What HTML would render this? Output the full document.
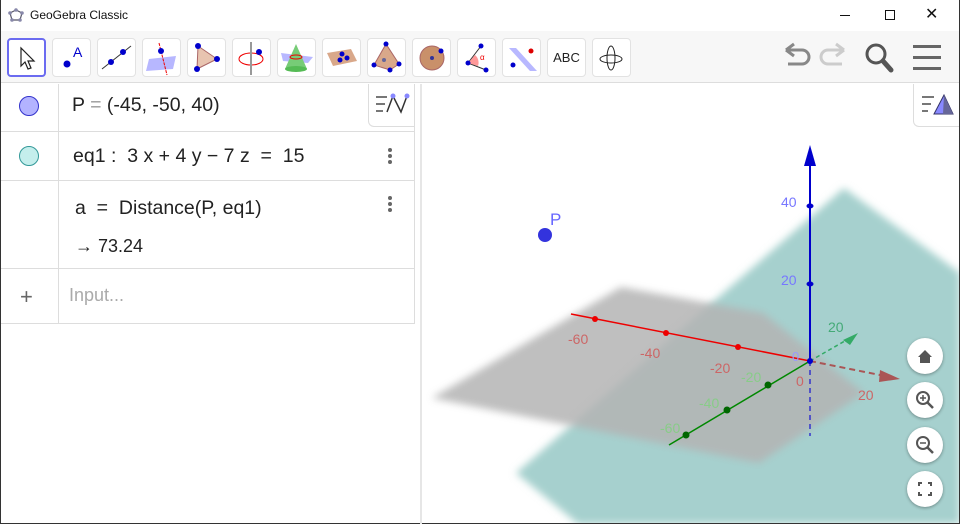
<!DOCTYPE html>
<html><head><meta charset="utf-8"><style>
*{margin:0;padding:0;box-sizing:border-box}
body{width:960px;height:524px;overflow:hidden;background:#fff;font-family:"Liberation Sans",sans-serif;position:relative}
.abs{position:absolute}
.btn{position:absolute;top:38px;width:39px;height:39px;border:1px solid #e2e2e2;border-radius:4px;background:#fff}
.row{position:absolute;left:1px;width:413px;border-bottom:1px solid #ddd}
.txt{position:absolute;font-size:19.5px;color:#222}
.dots{position:absolute;left:388px;width:4px}
.dots i{display:block;width:4px;height:4px;border-radius:2px;background:#666;margin-bottom:2px}
.circ{position:absolute;left:907px;width:36px;height:36px;border-radius:18px;background:#fff;box-shadow:0 1px 3px rgba(0,0,0,.35)}
</style></head><body>
<div class="abs" style="left:0;top:0;width:960px;height:524px;border:1px solid #333;border-top:none"></div>
<svg class="abs" style="left:8px;top:8px" width="16" height="14"><polygon points="8,2 14,5 12,12 4,12 2,5" fill="none" stroke="#556" stroke-width="1.2"/><g fill="#88a"><circle cx="8" cy="2" r="1.8"/><circle cx="14" cy="5" r="1.8"/><circle cx="12" cy="12" r="1.8"/><circle cx="4" cy="12" r="1.8"/><circle cx="2" cy="5" r="1.8"/></g></svg>
<div class="abs" style="left:30px;top:8px;font-size:12px;color:#111">GeoGebra Classic</div>
<div class="abs" style="left:840px;top:15px;width:10px;height:1px;background:#111"></div>
<div class="abs" style="left:885px;top:10px;width:10px;height:10px;border:1px solid #111"></div>
<div class="abs" style="left:925px;top:4px;font-size:16px;color:#111">✕</div>
<div class="abs" style="left:1px;top:31px;width:958px;height:52px;background:#f7f7f7;border-bottom:1px solid #ddd"></div>
<div class="btn" style="left:7px;border:2px solid #6b6bf0"><svg width="36" height="36"><path d="M12 8 L12 26 L16 22 L19 29 L22 28 L19 21 L25 21 Z" fill="#fff" stroke="#222" stroke-width="1.2"/></svg></div>
<div class="btn" style="left:52px"><svg width="37" height="37"><circle cx="14" cy="25" r="3.5" fill="#00c"/><text x="20" y="18" font-size="14" fill="#00c" font-family="Liberation Sans">A</text></svg></div>
<div class="btn" style="left:97px"><svg width="37" height="37"><line x1="4" y1="30" x2="33" y2="7" stroke="#333"/><circle cx="13" cy="23" r="3" fill="#00c"/><circle cx="25" cy="13" r="3" fill="#00c"/></svg></div>
<div class="btn" style="left:142px"><svg width="37" height="37"><polygon points="6,20 33,17 30,30 3,32" fill="#99f" opacity=".7"/><line x1="16" y1="4" x2="24" y2="36" stroke="#e00" stroke-dasharray="3,1"/><circle cx="18" cy="12" r="3" fill="#00c"/></svg></div>
<div class="btn" style="left:187px"><svg width="37" height="37"><polygon points="10,7 29,20 9,30" fill="#e8c4b0" stroke="#a66"/><circle cx="10" cy="7" r="3" fill="#00c"/><circle cx="29" cy="20" r="3" fill="#00c"/><circle cx="9" cy="30" r="3" fill="#00c"/></svg></div>
<div class="btn" style="left:232px"><svg width="37" height="37"><ellipse cx="18" cy="20" rx="12" ry="6" fill="none" stroke="#e00"/><line x1="18" y1="3" x2="18" y2="36" stroke="#999" stroke-width="2"/><circle cx="26" cy="13" r="3" fill="#00c"/></svg></div>
<div class="btn" style="left:277px"><svg width="37" height="37"><polygon points="3,14 35,18 30,24 5,22" fill="#88f" opacity=".6"/><polygon points="18,5 7,30 29,30" fill="#7c7"/><ellipse cx="18" cy="30" rx="11" ry="3" fill="#5b5"/><ellipse cx="18" cy="18" rx="6" ry="2" fill="none" stroke="#e00"/></svg></div>
<div class="btn" style="left:322px"><svg width="37" height="37"><polygon points="4,14 28,10 34,22 10,27" fill="#d9a88a"/><circle cx="19" cy="15" r="2.5" fill="#00c"/><circle cx="24" cy="19" r="2.5" fill="#00c"/><circle cx="17" cy="21" r="2.5" fill="#00c"/></svg></div>
<div class="btn" style="left:367px"><svg width="37" height="37"><polygon points="18,5 6,26 22,31 31,25" fill="#d9a88a" stroke="#a66"/><g fill="#00c"><circle cx="18" cy="5" r="2.5"/><circle cx="6" cy="26" r="2.5"/><circle cx="22" cy="31" r="2.5"/><circle cx="31" cy="25" r="2.5"/><circle cx="16" cy="21" r="2" fill="#669"/></g></svg></div>
<div class="btn" style="left:412px"><svg width="37" height="37"><circle cx="19" cy="19" r="12" fill="#c9906a" stroke="#a66"/><circle cx="19" cy="19" r="2" fill="#339"/><circle cx="28" cy="12" r="2.5" fill="#00c"/></svg></div>
<div class="btn" style="left:457px"><svg width="37" height="37"><path d="M10 24 L23 7 M10 24 L28 31" stroke="#333"/><path d="M10 24 L17 16 A10 10 0 0 1 20 27 Z" fill="#f99"/><text x="22" y="21" font-size="8" fill="#e00">α</text><g fill="#00c"><circle cx="10" cy="24" r="2.5"/><circle cx="23" cy="7" r="2.5"/><circle cx="28" cy="31" r="2.5"/></g></svg></div>
<div class="btn" style="left:502px"><svg width="37" height="37"><polygon points="6,9 13,9 34,32 27,32" fill="#88f" opacity=".6"/><circle cx="10" cy="26" r="2.5" fill="#00c"/><circle cx="28" cy="12" r="2.5" fill="#d00"/></svg></div>
<div class="btn" style="left:547px;font-size:13px;line-height:37px;text-align:center;color:#222">ABC</div>
<div class="btn" style="left:592px"><svg width="37" height="37"><ellipse cx="18" cy="20" rx="11" ry="4" fill="none" stroke="#222"/><ellipse cx="18" cy="19" rx="4" ry="12" fill="none" stroke="#222"/></svg></div>
<svg class="abs" style="left:780px;top:40px" width="165" height="36"><path d="M6 10 L14 4 M6 10 L14 16 M6 10 H22 A7 7 0 0 1 22 24 H8" fill="none" stroke="#888" stroke-width="3"/><path d="M64 10 L56 4 M64 10 L56 16 M64 10 H48 A7 7 0 0 0 48 24 H62" fill="none" stroke="#ccc" stroke-width="3"/><circle cx="96" cy="14" r="9" fill="none" stroke="#555" stroke-width="3"/><line x1="103" y1="21" x2="111" y2="30" stroke="#555" stroke-width="5" stroke-linecap="round"/><g fill="#666"><rect x="133" y="5" width="28" height="3"/><rect x="133" y="16" width="28" height="3"/><rect x="133" y="27" width="28" height="3"/></g></svg>
<div class="abs" style="left:58px;top:84px;width:1px;height:240px;background:#ddd"></div>
<div class="abs" style="left:414px;top:84px;width:1px;height:240px;background:#ddd"></div>
<div class="abs" style="left:420px;top:84px;width:2px;height:440px;background:#e6e6e6"></div>
<div class="row" style="top:84px;height:48px"></div>
<div class="row" style="top:132px;height:49px"></div>
<div class="row" style="top:181px;height:88px"></div>
<div class="row" style="top:269px;height:55px"></div>
<div class="abs" style="left:19px;top:96px;width:20px;height:20px;border-radius:10px;background:#b3b3ff;border:1px solid #33c"></div>
<div class="abs" style="left:19px;top:146px;width:20px;height:20px;border-radius:10px;background:#c4eeec;border:1px solid #399"></div>
<div class="txt" style="left:72px;top:94px">P <span style="color:#999">=</span> (-45, -50, 40)</div>
<div class="txt" style="left:73px;top:145px">eq1 : &nbsp;3 x + 4 y − 7 z &nbsp;= &nbsp;15</div>
<div class="txt" style="left:75px;top:197px">a &nbsp;= &nbsp;Distance(P, eq1)</div>
<div class="txt" style="left:75px;top:236px;font-size:18px">→ 73.24</div>
<div class="txt" style="left:20px;top:284px;font-size:22px;color:#666">+</div>
<div class="txt" style="left:69px;top:285px;font-size:18px;color:#aaa">Input...</div>
<div class="dots" style="top:148px"><i></i><i></i><i></i></div>
<div class="dots" style="top:196px"><i></i><i></i><i></i></div>
<div class="abs" style="left:368px;top:84px;width:46px;height:43px;background:#fff;border:1px solid #ddd;border-top:none;border-right:none;border-radius:0 0 0 6px"><svg width="46" height="43"><g stroke="#777" stroke-width="2"><line x1="7" y1="13" x2="18" y2="13"/><line x1="7" y1="20" x2="16" y2="20"/><line x1="7" y1="27" x2="14" y2="27"/></g><path d="M18 28 L24 12 L32 28 L38 12" fill="none" stroke="#333" stroke-width="1.5"/><circle cx="24" cy="12" r="2.5" fill="#88f"/><circle cx="38" cy="12" r="2.5" fill="#88f"/></svg></div>
<svg class="abs" style="left:422px;top:84px" width="537" height="439" viewBox="422 84 537 439">
<defs><filter id="b" x="-20%" y="-20%" width="140%" height="140%"><feGaussianBlur stdDeviation="4"/></filter></defs>
<polygon points="844,188 960,273 960,524 578,524 516,473" fill="#a6d0ce" filter="url(#b)"/>
<polygon points="432,398 621,287 763,313 864,393 759,463" fill="#b4b4b4" opacity=".85" filter="url(#b)"/>
<line x1="810" y1="361" x2="810" y2="436" stroke="#33c" stroke-width="1.5" stroke-dasharray="5,4"/>
<line x1="571" y1="314" x2="810" y2="361" stroke="#e00" stroke-width="1.5"/>
<line x1="810" y1="361" x2="885" y2="376" stroke="#a55" stroke-width="2" stroke-dasharray="6,4"/>
<polygon points="880,370 900,379 879,382" fill="#a55"/>
<line x1="669" y1="445" x2="810" y2="361" stroke="#080" stroke-width="1.5"/>
<line x1="810" y1="361" x2="850" y2="338" stroke="#3a6" stroke-width="1.5" stroke-dasharray="4,3"/>
<polygon points="843,340 858,333 850,345" fill="#3a6"/>
<line x1="810" y1="361" x2="810" y2="160" stroke="#00c" stroke-width="2"/>
<polygon points="804,166 810,145 816,166" fill="#00c"/>
<g fill="#e00"><circle cx="595" cy="319" r="3"/><circle cx="666" cy="333" r="3"/><circle cx="738" cy="347" r="3"/></g>
<g fill="#060"><circle cx="686" cy="435" r="3.5"/><circle cx="727" cy="410" r="3.5"/><circle cx="768" cy="385" r="3.5"/></g>
<g fill="#00c"><ellipse cx="810" cy="284" rx="3.5" ry="2.5"/><ellipse cx="810" cy="206" rx="3.5" ry="2.5"/><circle cx="810" cy="361" r="3"/></g>
<circle cx="545" cy="235" r="7" fill="#33d"/>
<g font-family="Liberation Sans" font-size="14">
<text x="550" y="225" font-size="17" fill="#66f">P</text>
<text x="781" y="207" fill="#77f">40</text><text x="781" y="285" fill="#77f">20</text>
<text x="568" y="344" fill="#c66">-60</text><text x="640" y="358" fill="#c66">-40</text><text x="710" y="373" fill="#c66">-20</text>
<text x="796" y="386" fill="#c66">0</text><text x="858" y="400" fill="#c66">20</text>
<text x="828" y="332" fill="#4a7">20</text>
<text x="741" y="382" fill="#8c8">-20</text><text x="699" y="408" fill="#8c8">-40</text><text x="660" y="433" fill="#8c8">-60</text>
<text x="792" y="361" fill="#99f" font-size="13">0</text>
</g></svg>
<div class="abs" style="left:913px;top:84px;width:46px;height:43px;background:#fff;border:1px solid #ddd;border-top:none;border-right:none;border-radius:0 0 0 6px"><svg width="46" height="43"><g stroke="#777" stroke-width="2"><line x1="8" y1="13" x2="20" y2="13"/><line x1="8" y1="20" x2="17" y2="20"/><line x1="8" y1="27" x2="14" y2="27"/></g><polygon points="30,11 20,30 39,30" fill="#88f" stroke="#336"/><polygon points="30,11 29,30 39,30" fill="#669"/></svg></div>
<div class="circ" style="top:338px"><svg width="36" height="36"><path d="M11 19 L18 12 L25 19 H23 V25 H13 V19 Z" fill="#555"/></svg></div>
<div class="circ" style="top:382px"><svg width="36" height="36"><circle cx="16" cy="16" r="6" fill="none" stroke="#555" stroke-width="2"/><line x1="20" y1="20" x2="26" y2="26" stroke="#555" stroke-width="2.5"/><path d="M13 16 H19 M16 13 V19" stroke="#555" stroke-width="1.5"/></svg></div>
<div class="circ" style="top:427px"><svg width="36" height="36"><circle cx="16" cy="16" r="6" fill="none" stroke="#555" stroke-width="2"/><line x1="20" y1="20" x2="26" y2="26" stroke="#555" stroke-width="2.5"/><path d="M13 16 H19" stroke="#555" stroke-width="1.5"/></svg></div>
<div class="circ" style="top:471px"><svg width="36" height="36"><path d="M12 15 V12 H15 M21 12 H24 V15 M24 21 V24 H21 M15 24 H12 V21" fill="none" stroke="#555" stroke-width="2"/></svg></div>
</body></html>
